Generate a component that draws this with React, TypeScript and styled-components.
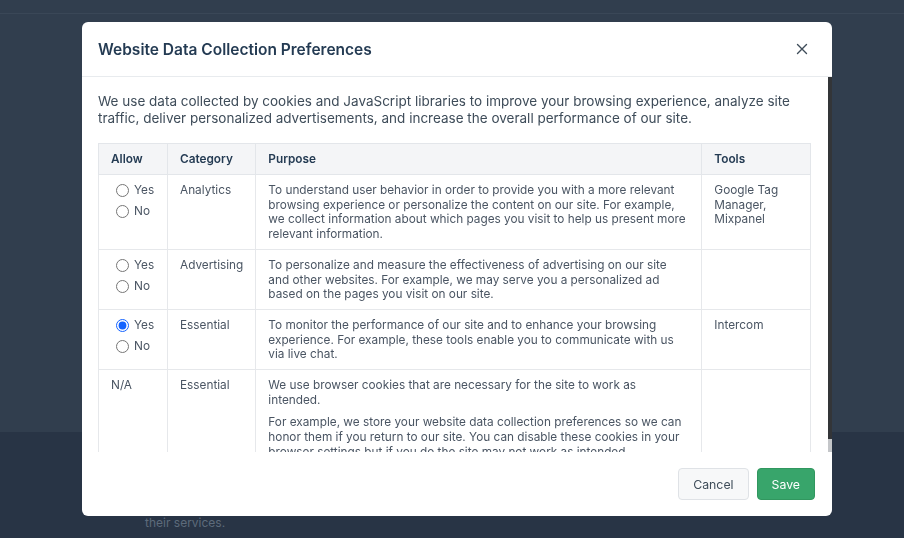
import * as React from "react";
import styled, { createGlobalStyle } from "styled-components";

const GlobalStyle = createGlobalStyle`
  html, body {
    margin: 0;
    padding: 0;
    width: 904px;
    height: 538px;
    overflow: hidden;
    font-family: Inter, "Noto Sans", sans-serif;
    -webkit-font-smoothing: antialiased;
  }
`;

const Page = styled.div`
  width: 904px;
  height: 538px;
  display: flex;
  flex-direction: column;
  background: #313e4e;
`;

const TopBar = styled.div`
  height: 13px;
  border-bottom: 1px solid #3a4757;
`;

const Hero = styled.div`
  flex: 0 0 418px;
`;

const Footer = styled.div`
  flex: 1;
  background: #283445;
  padding: 83px 0 0 145px;
  font-size: 12px;
  color: #5d6b7b;
`;

const Overlay = styled.div`
  position: fixed;
  inset: 0;
  display: flex;
  align-items: flex-start;
  justify-content: center;
  padding: 22px 0 0 10px;
`;

const Modal = styled.div`
  width: 750px;
  height: 494px;
  background: #fff;
  border-radius: 6px;
  display: flex;
  flex-direction: column;
  overflow: hidden;
`;

const Header = styled.div`
  height: 54px;
  flex: 0 0 auto;
  border-bottom: 1px solid #e8ebee;
  display: flex;
  align-items: center;
  justify-content: space-between;
  padding: 0 20px 0 16px;
`;

const Title = styled.h2`
  margin: 0;
  font-size: 15.5px;
  font-weight: 600;
  color: #243b53;
`;

const CloseButton = styled.button`
  border: none;
  background: none;
  padding: 0;
  width: 20px;
  height: 20px;
  display: flex;
  align-items: center;
  justify-content: center;
  color: #3e4c59;
  cursor: pointer;
`;

const BodyWrap = styled.div`
  flex: 1;
  min-height: 0;
  display: flex;
`;

const Body = styled.div`
  flex: 1;
  overflow: hidden;
  padding: 16px 17px 0 16px;
`;

const Track = styled.div`
  width: 4px;
  background: #333538;
  display: flex;
  flex-direction: column;
  justify-content: flex-end;
`;

const Thumb = styled.div`
  height: 13px;
  background: #c4c6c9;
`;

const Intro = styled.p`
  margin: 0 0 16px;
  font-size: 13.5px;
  line-height: 17px;
  color: #3e4c59;
`;

const Table = styled.table`
  width: 713px;
  border-collapse: collapse;
  font-size: 11.8px;
  line-height: 14.7px;
  color: #4a5563;
`;

const Th = styled.th<{ $w?: number }>`
  ${(p) => (p.$w ? `width: ${p.$w}px;` : "")}
  background: #f4f5f7;
  border: 1px solid #e3e6ea;
  height: 31px;
  padding: 0 12px;
  text-align: left;
  font-weight: 600;
  color: #243b53;
  box-sizing: border-box;
`;

const Td = styled.td`
  border: 1px solid #e6e8eb;
  padding: 8px 12px 7px;
  vertical-align: top;
`;

const Para = styled.p`
  margin: 0 0 8px;
  &:last-child {
    margin: 0;
  }
`;

const RadioGroup = styled.div`
  display: flex;
  flex-direction: column;
  gap: 6px;
`;

const RadioLabel = styled.label`
  display: flex;
  align-items: center;
  gap: 5px;
  height: 15px;
`;

const Radio = styled.input`
  margin: 0 0 0 5px;
  width: 13px;
  height: 13px;
  accent-color: #1463ff;
`;

const Actions = styled.div`
  flex: 0 0 auto;
  height: 64px;
  display: flex;
  align-items: center;
  justify-content: flex-end;
  gap: 8px;
  padding: 0 17px 0 0;
`;

const Button = styled.button<{ $primary?: boolean }>`
  height: 32px;
  padding: 0 14px;
  border-radius: 4px;
  font-family: inherit;
  font-size: 12.3px;
  cursor: pointer;
  border: 1px solid ${(p) => (p.$primary ? "#31975f" : "#dfe2e6")};
  background: ${(p) => (p.$primary ? "#38a56b" : "#f7f8f9")};
  color: ${(p) => (p.$primary ? "#fff" : "#3e4c59")};
`;

type Row = {
  name: string;
  allow: "none" | "yes" | "na";
  category: string;
  purpose: string[];
  tools: string;
};

const rows: Row[] = [
  {
    name: "analytics",
    allow: "none",
    category: "Analytics",
    purpose: [
      "To understand user behavior in order to provide you with a more relevant browsing experience or personalize the content on our site. For example, we collect information about which pages you visit to help us present more relevant information.",
    ],
    tools: "Google Tag Manager, Mixpanel",
  },
  {
    name: "advertising",
    allow: "none",
    category: "Advertising",
    purpose: [
      "To personalize and measure the effectiveness of advertising on our site and other websites. For example, we may serve you a personalized ad based on the pages you visit on our site.",
    ],
    tools: "",
  },
  {
    name: "functional",
    allow: "yes",
    category: "Essential",
    purpose: [
      "To monitor the performance of our site and to enhance your browsing experience. For example, these tools enable you to communicate with us via live chat.",
    ],
    tools: "Intercom",
  },
  {
    name: "essential",
    allow: "na",
    category: "Essential",
    purpose: [
      "We use browser cookies that are necessary for the site to work as intended.",
      "For example, we store your website data collection preferences so we can honor them if you return to our site. You can disable these cookies in your browser settings but if you do the site may not work as intended.",
    ],
    tools: "",
  },
];

const CloseIcon = () => (
  <svg width="12" height="12" viewBox="0 0 12 12" fill="none">
    <path d="M1.5 1.5l9 9M10.5 1.5l-9 9" stroke="currentColor" strokeWidth="1.4" strokeLinecap="round" />
  </svg>
);

const AllowCell = ({ row }: { row: Row }) => {
  if (row.allow === "na") return <>N/A</>;
  return (
    <RadioGroup>
      <RadioLabel>
        <Radio type="radio" name={row.name} defaultChecked={row.allow === "yes"} />
        Yes
      </RadioLabel>
      <RadioLabel>
        <Radio type="radio" name={row.name} />
        No
      </RadioLabel>
    </RadioGroup>
  );
};

export default function App() {
  return (
    <>
      <GlobalStyle />
      <Page>
        <TopBar />
        <Hero />
        <Footer>their services.</Footer>
      </Page>
      <Overlay>
        <Modal>
          <Header>
            <Title>Website Data Collection Preferences</Title>
            <CloseButton aria-label="Close">
              <CloseIcon />
            </CloseButton>
          </Header>
          <BodyWrap>
            <Body>
              <Intro>
                We use data collected by cookies and JavaScript libraries to improve your browsing experience, analyze
                site traffic, deliver personalized advertisements, and increase the overall performance of our site.
              </Intro>
              <Table>
                <thead>
                  <tr>
                    <Th $w={69}>Allow</Th>
                    <Th $w={88}>Category</Th>
                    <Th $w={446}>Purpose</Th>
                    <Th>Tools</Th>
                  </tr>
                </thead>
                <tbody>
                  {rows.map((row) => (
                    <tr key={row.name}>
                      <Td>
                        <AllowCell row={row} />
                      </Td>
                      <Td>{row.category}</Td>
                      <Td>
                        {row.purpose.map((p, i) => (
                          <Para key={i}>{p}</Para>
                        ))}
                      </Td>
                      <Td>{row.tools}</Td>
                    </tr>
                  ))}
                </tbody>
              </Table>
            </Body>
            <Track>
              <Thumb />
            </Track>
          </BodyWrap>
          <Actions>
            <Button>Cancel</Button>
            <Button $primary>Save</Button>
          </Actions>
        </Modal>
      </Overlay>
    </>
  );
}
